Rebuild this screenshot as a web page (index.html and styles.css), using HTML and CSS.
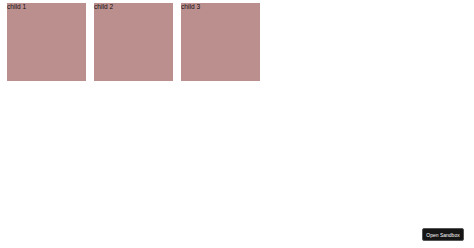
FILE: index.html
```html
<!DOCTYPE html>
<html>
<head>
<meta charset="utf-8">
<link rel="stylesheet" href="styles.css">
</head>
<body>
<div class="row">
  <div class="child">child 1</div>
  <div class="child">child 2</div>
  <div class="child">child 3</div>
</div>
<a class="sandbox">Open Sandbox</a>
</body>
</html>
```
FILE: styles.css
```css
html, body {
  margin: 0;
  padding: 0;
  background: #ffffff;
}
body {
  font-family: "Liberation Sans", Arial, sans-serif;
}
.row {
  display: flex;
  gap: 8px;
  padding: 3px 7px;
}
.child {
  width: 79px;
  height: 78px;
  background: #bc8f8f;
  color: #111111;
  font-size: 6.6px;
  line-height: 8px;
}
.sandbox {
  position: fixed;
  right: 10px;
  bottom: 7px;
  width: 42px;
  height: 13px;
  box-sizing: border-box;
  background: #151515;
  border: 1px solid #555;
  border-radius: 2px;
  color: #fff;
  font-size: 5px;
  display: flex;
  align-items: center;
  justify-content: center;
}
```
